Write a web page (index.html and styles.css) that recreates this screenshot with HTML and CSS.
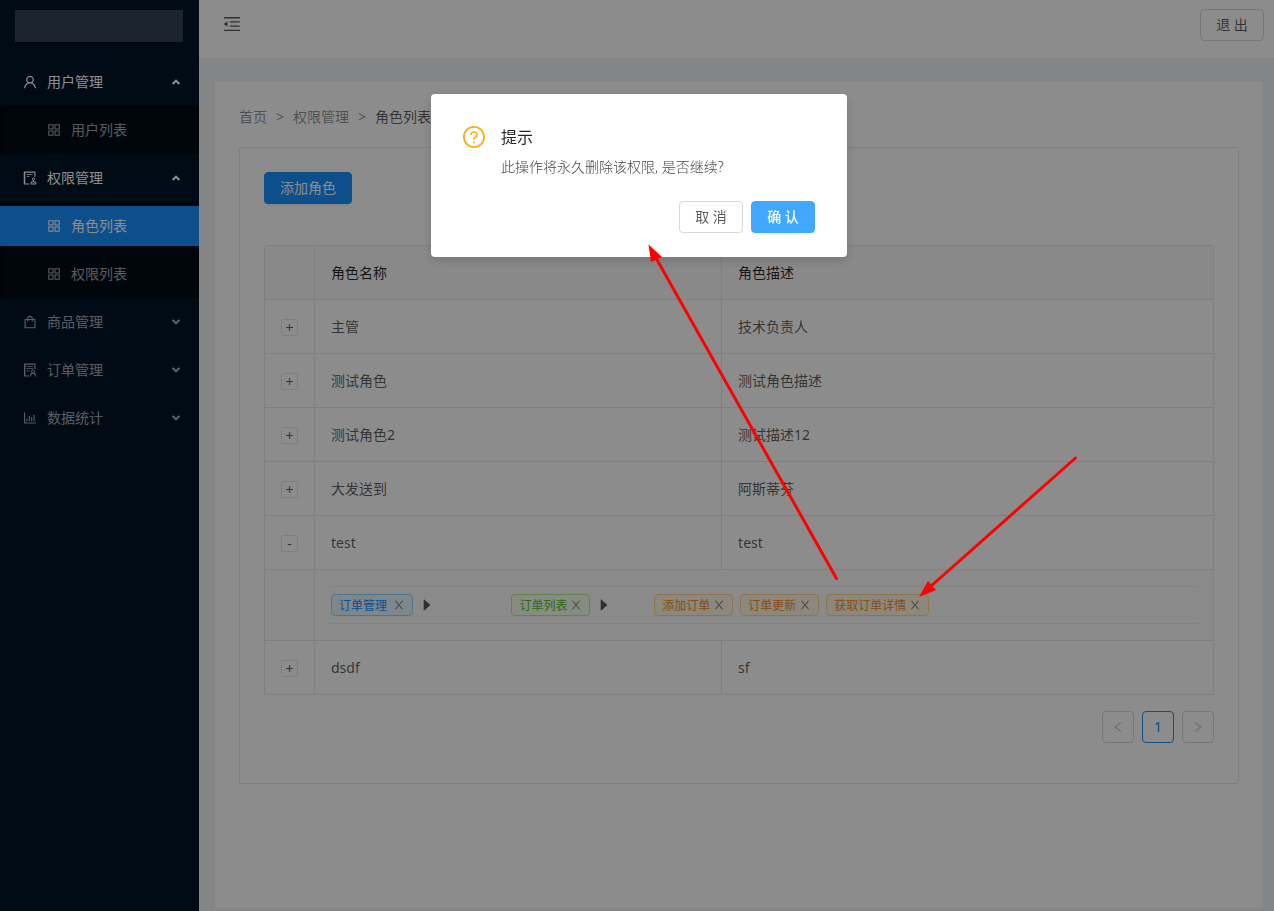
FILE: index.html
```
<!DOCTYPE html>
<html lang="zh-CN">
  <head>
    <meta charset="UTF-8" />
    <meta name="viewport" content="width=device-width, initial-scale=1.0" />
    <title>角色列表</title>
    <link rel="stylesheet" href="styles.css">
  </head>
  <body>
    <!-- icons -->
    <svg class="sprite" aria-hidden="true">
      <symbol id="i-user" viewBox="64 64 896 896"><path d="M858.5 763.6a374 374 0 0 0-80.6-119.5 375.63 375.63 0 0 0-119.5-80.6c-.4-.2-.8-.3-1.2-.5C719.5 518 760 444.7 760 362c0-137-111-248-248-248S264 225 264 362c0 82.7 40.5 156 102.8 201.1-.4.2-.8.3-1.2.5-44.8 18.9-85 46-119.5 80.6a375.63 375.63 0 0 0-80.6 119.5A371.7 371.7 0 0 0 136 901.8a8 8 0 0 0 8 8.2h60c4.4 0 7.9-3.5 8-7.8 2-77.2 33-149.5 87.8-204.3 56.7-56.7 132-87.9 212.2-87.9s155.5 31.2 212.2 87.9C779 752.7 810 825 812 902.2c.1 4.4 3.6 7.8 8 7.8h60a8 8 0 0 0 8-8.2c-1-47.8-10.9-94.3-29.5-138.2zM512 534c-45.9 0-89.1-17.9-121.6-50.4S340 407.9 340 362c0-45.9 17.9-89.1 50.4-121.6S466.1 190 512 190s89.1 17.9 121.6 50.4S684 316.1 684 362c0 45.9-17.9 89.1-50.4 121.6S557.9 534 512 534z"/></symbol>
      <symbol id="i-grid" viewBox="64 64 896 896"><path fill-rule="evenodd" d="M144 144h336v336H144zM212 212v200h200V212zM544 144h336v336H544zM612 212v200h200V212zM144 544h336v336H144zM212 612v200h200V612zM544 544h336v336H544zM612 612v200h200V612z"/></symbol>
      <symbol id="i-audit" viewBox="64 64 896 896"><path d="M296 250h384v48H296zM296 394h184v48H296zM144 96h688c18 0 32 14 32 32v300h-72V168H208v688h264v72H144c-18 0-32-14-32-32V128c0-18 14-32 32-32z"/><path fill-rule="evenodd" d="M732 476a100 100 0 0 1 32 194v62h116c18 0 32 14 32 32v132c0 18-14 32-32 32H584c-18 0-32-14-32-32V764c0-18 14-32 32-32h116v-62a100 100 0 0 1 32-194zM732 530a46 46 0 1 0 1 0zM612 792v76h240v-76z"/></symbol>
      <symbol id="i-solution" viewBox="64 64 896 896"><path d="M280 256h432v48H280zM280 400h432v48H280zM280 544h216v48H280zM160 96h672c18 0 32 14 32 32v330h-72V168H216v688h230v72H160c-18 0-32-14-32-32V128c0-18 14-32 32-32z"/><path fill-rule="evenodd" d="M704 488a120 120 0 0 1 84 206c66 34 108 100 112 234h-64c-4-104-58-176-132-176s-128 72-132 176h-64c4-134 46-200 112-234a120 120 0 0 1 84-206zM704 548a61 61 0 1 0 1 0z"/></symbol>
      <symbol id="i-shopping" viewBox="64 64 896 896"><path d="M832 312H696v-16c0-101.6-82.4-184-184-184s-184 82.4-184 184v16H192c-17.7 0-32 14.3-32 32v536c0 17.7 14.3 32 32 32h640c17.7 0 32-14.3 32-32V344c0-17.7-14.3-32-32-32zm-432-16c0-61.9 50.1-112 112-112s112 50.1 112 112v16H400v-16zm392 544H232V384h96v88c0 4.4 3.6 8 8 8h56c4.4 0 8-3.6 8-8v-88h224v88c0 4.4 3.6 8 8 8h56c4.4 0 8-3.6 8-8v-88h96v456z"/></symbol>
      <symbol id="i-chart" viewBox="64 64 896 896"><path d="M888 792H200V168c0-4.4-3.6-8-8-8h-56c-4.4 0-8 3.6-8 8v688c0 4.4 3.6 8 8 8h752c4.4 0 8-3.6 8-8v-56c0-4.4-3.6-8-8-8zm-600-80h56c4.4 0 8-3.6 8-8V560c0-4.4-3.6-8-8-8h-56c-4.4 0-8 3.6-8 8v144c0 4.4 3.6 8 8 8zm152 0h56c4.4 0 8-3.6 8-8V384c0-4.4-3.6-8-8-8h-56c-4.4 0-8 3.6-8 8v320c0 4.4 3.6 8 8 8zm152 0h56c4.4 0 8-3.6 8-8V462c0-4.4-3.6-8-8-8h-56c-4.4 0-8 3.6-8 8v242c0 4.4 3.6 8 8 8zm152 0h56c4.4 0 8-3.6 8-8V304c0-4.4-3.6-8-8-8h-56c-4.4 0-8 3.6-8 8v400c0 4.4 3.6 8 8 8z"/></symbol>
      <symbol id="i-arrow" viewBox="0 0 10 6"><path d="M1.6 1L5 4.3 8.4 1" fill="none" stroke="currentColor" stroke-width="2"/></symbol>
      <symbol id="i-fold" viewBox="64 64 896 896"><path d="M408 442h480c4.4 0 8-3.6 8-8v-56c0-4.4-3.6-8-8-8H408c-4.4 0-8 3.6-8 8v56c0 4.4 3.6 8 8 8zm-8 204c0 4.4 3.6 8 8 8h480c4.4 0 8-3.6 8-8v-56c0-4.4-3.6-8-8-8H408c-4.4 0-8 3.6-8 8v56zm504-486H120c-4.4 0-8 3.6-8 8v56c0 4.4 3.6 8 8 8h784c4.4 0 8-3.6 8-8v-56c0-4.4-3.6-8-8-8zm0 632H120c-4.4 0-8 3.6-8 8v56c0 4.4 3.6 8 8 8h784c4.4 0 8-3.6 8-8v-56c0-4.4-3.6-8-8-8zM115.4 518.9L271.7 642c5.8 4.6 14.4.5 14.4-6.9V388.9c0-7.4-8.5-11.5-14.4-6.9L115.4 505.1a8.74 8.74 0 0 0 0 13.8z"/></symbol>
      <symbol id="i-close" viewBox="64 64 896 896"><path d="M563.8 512l262.5-312.9c4.4-5.2.7-13.1-6.1-13.1h-79.8c-4.7 0-9.2 2.1-12.3 5.7L511.6 449.8 295.1 191.7c-3-3.6-7.5-5.7-12.3-5.7H203c-6.8 0-10.5 7.9-6.1 13.1L459.4 512 196.9 824.9A7.95 7.95 0 0 0 203 838h79.8c4.7 0 9.2-2.1 12.3-5.7l216.5-258.1 216.5 258.1c3 3.6 7.5 5.7 12.3 5.7h79.8c6.8 0 10.5-7.9 6.1-13.1L563.8 512z"/></symbol>
      <symbol id="i-caret" viewBox="64 64 896 896"><path d="M715.8 493.5L335 165.1c-14.2-12.2-35-1.2-35 18.5v656.8c0 19.7 20.8 30.7 35 18.5l380.8-328.4c10.9-9.4 10.9-27.6 0-37z"/></symbol>
      <symbol id="i-left" viewBox="64 64 896 896"><path d="M724 218.3V141c0-6.7-7.7-10.4-12.9-6.3L260.3 486.8a31.86 31.86 0 0 0 0 50.3l450.8 352.1c5.3 4.1 12.9.4 12.9-6.3v-77.3c0-4.9-2.3-9.6-6.1-12.6l-360-281 360-281.1c3.8-3 6.1-7.7 6.1-12.6z"/></symbol>
      <symbol id="i-question" viewBox="64 64 896 896"><path d="M512 64C264.6 64 64 264.6 64 512s200.6 448 448 448 448-200.6 448-448S759.4 64 512 64zm0 820c-205.4 0-372-166.6-372-372s166.6-372 372-372 372 166.6 372 372-166.6 372-372 372z"/><path d="M623.6 316.7C593.6 290.4 554 276 512 276s-81.6 14.5-111.6 40.7C369.2 344 352 380.7 352 420v7.6c0 4.4 3.6 8 8 8h48c4.4 0 8-3.6 8-8V420c0-44.1 43.1-80 96-80s96 35.9 96 80c0 31.1-22 59.6-56.1 72.7-21.2 8.1-39.2 22.3-52.1 40.9-13.1 19-19.9 41.8-19.9 64.9V620c0 4.4 3.6 8 8 8h48c4.4 0 8-3.6 8-8v-22.7a48.3 48.3 0 0 1 30.9-44.8c59-22.7 97.1-74.7 97.1-132.5.1-39.3-17.1-76-48.3-103.3zM472 732a40 40 0 1 0 80 0 40 40 0 1 0-80 0z"/></symbol>
    </svg>

    <div class="layout">
      <aside class="sider">
        <div class="logo"></div>
        <nav class="menu">
          <button class="menuTitle open"><svg class="icon"><use href="#i-user"/></svg><span>用户管理</span><svg class="arrow"><use href="#i-arrow"/></svg></button>
          <div class="subMenu">
            <a class="menuItem" href="#users"><svg class="icon"><use href="#i-grid"/></svg><span>用户列表</span></a>
          </div>
          <button class="menuTitle open"><svg class="icon"><use href="#i-audit"/></svg><span>权限管理</span><svg class="arrow"><use href="#i-arrow"/></svg></button>
          <div class="subMenu">
            <a class="menuItem selected" href="#roles"><svg class="icon"><use href="#i-grid"/></svg><span>角色列表</span></a>
            <a class="menuItem" href="#rights"><svg class="icon"><use href="#i-grid"/></svg><span>权限列表</span></a>
          </div>
          <button class="menuTitle"><svg class="icon"><use href="#i-shopping"/></svg><span>商品管理</span><svg class="arrow"><use href="#i-arrow"/></svg></button>
          <button class="menuTitle"><svg class="icon"><use href="#i-solution"/></svg><span>订单管理</span><svg class="arrow"><use href="#i-arrow"/></svg></button>
          <button class="menuTitle"><svg class="icon"><use href="#i-chart"/></svg><span>数据统计</span><svg class="arrow"><use href="#i-arrow"/></svg></button>
        </nav>
      </aside>

      <div class="main">
        <header class="header">
          <button class="foldBtn" aria-label="收起菜单"><svg><use href="#i-fold"/></svg></button>
          <button class="btn">退 出</button>
        </header>
        <main class="content">
          <div class="breadcrumb">
            <a href="#home">首页</a><span class="separator">&gt;</span><a href="#rights">权限管理</a><span class="separator">&gt;</span><span class="current">角色列表</span>
          </div>
          <section class="card">
            <button class="btn primary">添加角色</button>
            <table class="roleTable">
              <thead>
                <tr><th class="expandCol"></th><th class="nameCol">角色名称</th><th>角色描述</th></tr>
              </thead>
              <tbody>
                <tr><td><button class="expandBtn">+</button></td><td>主管</td><td>技术负责人</td></tr>
                <tr><td><button class="expandBtn">+</button></td><td>测试角色</td><td>测试角色描述</td></tr>
                <tr><td><button class="expandBtn">+</button></td><td>测试角色2</td><td>测试描述12</td></tr>
                <tr><td><button class="expandBtn">+</button></td><td>大发送到</td><td>阿斯蒂芬</td></tr>
                <tr><td><button class="expandBtn">-</button></td><td>test</td><td>test</td></tr>
                <tr class="expandedRow">
                  <td></td>
                  <td colspan="2">
                    <div class="rights">
                      <div class="rightsCol">
                        <span class="tag blue">订单管理<button class="tagClose" aria-label="删除"><svg><use href="#i-close"/></svg></button></span>
                        <svg class="caret"><use href="#i-caret"/></svg>
                      </div>
                      <div class="rightsRest">
                        <div class="rightsCol">
                          <span class="tag green">订单列表<button class="tagClose" aria-label="删除"><svg><use href="#i-close"/></svg></button></span>
                          <svg class="caret"><use href="#i-caret"/></svg>
                        </div>
                        <div class="rightsRest">
                          <span class="tag orange">添加订单<button class="tagClose" aria-label="删除"><svg><use href="#i-close"/></svg></button></span>
                          <span class="tag orange">订单更新<button class="tagClose" aria-label="删除"><svg><use href="#i-close"/></svg></button></span>
                          <span class="tag orange">获取订单详情<button class="tagClose" aria-label="删除"><svg><use href="#i-close"/></svg></button></span>
                        </div>
                      </div>
                    </div>
                  </td>
                </tr>
                <tr><td><button class="expandBtn">+</button></td><td>dsdf</td><td>sf</td></tr>
              </tbody>
            </table>
            <div class="pagination">
              <button class="pageBtn" disabled aria-label="上一页"><svg><use href="#i-left"/></svg></button>
              <button class="pageBtn active">1</button>
              <button class="pageBtn next" disabled aria-label="下一页"><svg><use href="#i-left"/></svg></button>
            </div>
          </section>
        </main>
      </div>
    </div>

    <div class="mask">
      <div class="modal" role="dialog" aria-labelledby="modalTitle">
        <div class="modalBody">
          <svg class="modalIcon"><use href="#i-question"/></svg>
          <div>
            <h2 id="modalTitle">提示</h2>
            <p>此操作将永久删除该权限, 是否继续?</p>
          </div>
        </div>
        <div class="modalBtns">
          <button class="btn">取 消</button>
          <button class="btn primary hover">确 认</button>
        </div>
      </div>
    </div>

    <svg class="annotation" width="1274" height="911" aria-hidden="true">
      <path d="M836.5 578.5L656 258M1075.5 458L930 587"/>
      <polygon points="648.5,244.5 651,262 662,257"/>
      <polygon points="919,597 928,581 936,590"/>
    </svg>
  </body>
</html>
```
FILE: styles.css
```
* {
  box-sizing: border-box;
}
body {
  margin: 0;
  font-family: "Noto Sans", "Noto Sans CJK SC", sans-serif;
  font-size: 14px;
  line-height: 21px;
  color: rgba(0, 0, 0, 0.65);
}
button {
  font: inherit;
  color: inherit;
  cursor: pointer;
}
a {
  color: inherit;
  text-decoration: none;
}
svg {
  display: block;
  fill: currentColor;
}
.sprite {
  display: none;
}
.layout {
  display: flex;
  min-height: 100vh;
}

/* sider */
.sider {
  flex: none;
  width: 199px;
  background-color: #001529;
  color: rgba(255, 255, 255, 0.65);
}
.logo {
  height: 32px;
  margin: 10px 16px 16px 15px;
  background-color: rgba(255, 255, 255, 0.2);
}
.menu {
  display: flex;
  flex-direction: column;
  line-height: 20px;
}
.menuTitle {
  display: flex;
  align-items: center;
  height: 40px;
  margin: 4px 0;
  padding: 0 18px 0 23px;
  border: none;
  background: none;
}
.menuTitle.open {
  color: white;
}
.icon {
  flex: none;
  width: 14px;
  height: 14px;
  margin-right: 10px;
}
.arrow {
  width: 10px;
  height: 6px;
  margin-left: auto;
}
.open .arrow {
  transform: rotate(180deg);
}
.subMenu {
  background-color: #000c17;
  box-shadow: inset 0 2px 8px rgba(0, 0, 0, 0.45);
  padding: 4px 0;
}
.menuItem {
  display: flex;
  align-items: center;
  height: 40px;
  padding-left: 47px;
}
.menuItem + .menuItem {
  margin-top: 8px;
}
.menuItem.selected {
  background-color: #1890ff;
  color: white;
}

/* main */
.main {
  flex: 1;
  min-width: 0;
  display: flex;
  flex-direction: column;
  background-color: #f0f2f5;
  padding-bottom: 3px;
}
.header {
  display: flex;
  justify-content: space-between;
  height: 58px;
  padding: 9px 10px 0 24px;
  background-color: white;
}
.foldBtn {
  height: 30px;
  padding: 0;
  border: none;
  background: none;
}
.foldBtn svg {
  width: 18px;
  height: 18px;
}
.btn {
  height: 32px;
  min-width: 64px;
  padding: 0 15px;
  border: 1px solid #d9d9d9;
  border-radius: 4px;
  background-color: white;
  line-height: 20px;
}
.btn.primary {
  border-color: #1890ff;
  background-color: #1890ff;
  color: white;
  box-shadow: 0 2px 0 rgba(0, 0, 0, 0.04);
}
.btn.primary.hover {
  border-color: #40a9ff;
  background-color: #40a9ff;
  font-weight: 500;
}
.content {
  flex: 1;
  margin: 24px 11px 0 16px;
  padding: 24px;
  background-color: white;
}
.breadcrumb {
  color: rgba(0, 0, 0, 0.45);
}
.separator {
  margin: 0 9px;
}
.current {
  color: rgba(0, 0, 0, 0.65);
}
.card {
  margin-top: 20px;
  padding: 24px;
  border: 1px solid #e8e8e8;
  border-radius: 2px;
}

/* table */
.roleTable {
  width: 100%;
  margin-top: 41px;
  table-layout: fixed;
  border-collapse: separate;
  border-spacing: 0;
  border: 1px solid #e8e8e8;
  border-width: 1px 0 0 1px;
  border-radius: 4px 4px 0 0;
}
.roleTable th,
.roleTable td {
  height: 54px;
  padding: 16px;
  border: 1px solid #e8e8e8;
  border-width: 0 1px 1px 0;
  text-align: left;
}
.roleTable th {
  background-color: #fafafa;
  color: rgba(0, 0, 0, 0.85);
  font-weight: 400;
}
.expandCol {
  width: 50px;
}
.roleTable .nameCol {
  width: 42.9%;
}
.expandBtn {
  display: block;
  width: 17px;
  height: 17px;
  margin-top: 2px;
  padding: 0;
  border: 1px solid #e8e8e8;
  border-radius: 2px;
  background-color: white;
  line-height: 14px;
}
.expandedRow td {
  background-color: #fbfbfb;
}
.rights {
  display: flex;
  padding: 7px 0;
  border: 1px solid #eee;
  border-width: 1px 0;
}
.rightsCol {
  flex: none;
  display: flex;
  align-items: center;
  width: calc(100% * 5 / 24);
}
.rightsRest {
  flex: 1;
  display: flex;
}
.tag {
  display: flex;
  align-items: center;
  height: 22px;
  margin-right: 7px;
  padding: 0 7px;
  border: 1px solid;
  border-radius: 4px;
  font-size: 12px;
  line-height: 21px;
  white-space: nowrap;
}
.tag.blue {
  color: #1890ff;
  background-color: #e6f7ff;
  border-color: #91d5ff;
}
.tag.green {
  color: #52c41a;
  background-color: #f6ffed;
  border-color: #b7eb8f;
}
.tag.orange {
  color: #fa8c16;
  background-color: #fff7e6;
  border-color: #ffd591;
}
.tagClose {
  margin: 0 0 0 3px;
  padding: 0;
  border: none;
  background: none;
  color: rgba(0, 0, 0, 0.45);
}
.tag.blue .tagClose {
  margin-left: 6px;
}
.tagClose svg {
  width: 12px;
  height: 12px;
}
.caret {
  width: 14px;
  height: 14px;
}

/* pagination */
.pagination {
  display: flex;
  justify-content: flex-end;
  gap: 8px;
  margin: 16px 0;
}
.pageBtn {
  display: flex;
  align-items: center;
  justify-content: center;
  width: 32px;
  height: 32px;
  padding: 0;
  border: 1px solid #d9d9d9;
  border-radius: 4px;
  background-color: white;
  line-height: 20px;
}
.pageBtn:disabled {
  color: rgba(0, 0, 0, 0.25);
}
.pageBtn.active {
  border-color: #1890ff;
  color: #1890ff;
}
.pageBtn svg {
  width: 12px;
  height: 12px;
}
.next svg {
  transform: scaleX(-1);
}

/* confirm modal */
.mask {
  position: fixed;
  inset: 0;
  padding: 94px 0 0 4px;
  background-color: rgba(0, 0, 0, 0.45);
}
.modal {
  width: 416px;
  margin: 0 auto;
  padding: 32px 32px 24px;
  border-radius: 4px;
  background-color: white;
  box-shadow: 0 4px 12px rgba(0, 0, 0, 0.15);
}
.modalBody {
  display: flex;
}
.modalIcon {
  flex: none;
  width: 22px;
  height: 22px;
  margin-right: 16px;
  color: #faad14;
}
.modal h2 {
  margin: 0;
  font-size: 16px;
  font-weight: 400;
  line-height: 22px;
  color: rgba(0, 0, 0, 0.85);
}
.modal p {
  margin: 8px 0 0;
  font-weight: 300;
  color: rgba(0, 0, 0, 0.75);
}
.modalBtns {
  display: flex;
  justify-content: flex-end;
  gap: 8px;
  margin-top: 24px;
}
.annotation {
  position: absolute;
  top: 0;
  left: 0;
  fill: red;
  pointer-events: none;
}
.annotation path {
  fill: none;
  stroke: red;
  stroke-width: 3;
  stroke-linecap: round;
}
```
